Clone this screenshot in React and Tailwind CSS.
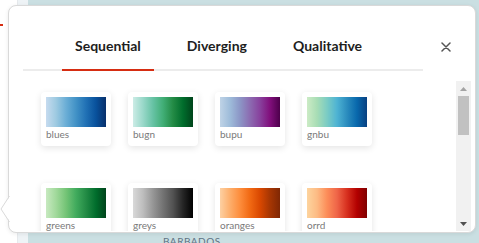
import { useState } from "react";

const palettes = [
  { name: "blues", bg: "bg-[linear-gradient(to_right,#c6dbef,#9ecae1,#6baed6,#4292c6,#2171b5,#08519c,#08306b)]" },
  { name: "bugn", bg: "bg-[linear-gradient(to_right,#ccece6,#99d8c9,#66c2a4,#41ae76,#238b45,#006d2c,#00441b)]" },
  { name: "bupu", bg: "bg-[linear-gradient(to_right,#bfd3e6,#9ebcda,#8c96c6,#8c6bb1,#88419d,#810f7c,#4d004b)]" },
  { name: "gnbu", bg: "bg-[linear-gradient(to_right,#ccebc5,#a8ddb5,#7bccc4,#4eb3d3,#2b8cbe,#0868ac,#084081)]" },
  { name: "greens", bg: "bg-[linear-gradient(to_right,#c7e9c0,#a1d99b,#74c476,#41ab5d,#238b45,#006d2c,#00441b)]" },
  { name: "greys", bg: "bg-[linear-gradient(to_right,#d9d9d9,#bdbdbd,#969696,#737373,#525252,#252525,#000000)]" },
  { name: "oranges", bg: "bg-[linear-gradient(to_right,#fdd0a2,#fdae6b,#fd8d3c,#f16913,#d94801,#a63603,#7f2704)]" },
  { name: "orrd", bg: "bg-[linear-gradient(to_right,#fdd49e,#fdbb84,#fc8d59,#ef6548,#d7301f,#b30000,#7f0000)]" },
  { name: "pubu", bg: "bg-[linear-gradient(to_right,#d0d1e6,#a6bddb,#74a9cf,#3690c0,#0570b0,#045a8d,#023858)]" },
  { name: "purd", bg: "bg-[linear-gradient(to_right,#d4b9da,#c994c7,#df65b0,#e7298a,#ce1256,#980043,#67001f)]" },
  { name: "reds", bg: "bg-[linear-gradient(to_right,#fcbba1,#fc9272,#fb6a4a,#ef3b2c,#cb181d,#a50f15,#67000d)]" },
  { name: "ylgn", bg: "bg-[linear-gradient(to_right,#d9f0a3,#addd8e,#78c679,#41ab5d,#238443,#006837,#004529)]" },
];

const tabs = ["Sequential", "Diverging", "Qualitative"];

const PaletteCard = ({ name, bg }) => (
  <div className="w-[70px] h-[54px] rounded-[4px] bg-white p-[5px] shadow-[0_2px_7px_rgba(0,0,0,0.11)]">
    <div className={`w-[60px] h-[30px] ${bg}`} />
    <div className="mt-[1px] text-[10px] leading-[12px] text-[#7a7a7a]">{name}</div>
  </div>
);

// classic scrollbar look (headless browser draws none)
const Scrollbar = () => (
  <div className="w-[15px] h-full flex flex-col bg-[#f1f1f1]">
    <div className="h-[15px] flex items-center justify-center">
      <svg width="7" height="4" viewBox="0 0 7 4">
        <path d="M3.5 0 L7 4 L0 4 Z" fill="#a3a3a3" />
      </svg>
    </div>
    <div className="mx-[2px] h-[39px] bg-[#c1c1c1]" />
    <div className="flex-1" />
    <div className="h-[15px] flex items-center justify-center">
      <svg width="7" height="4" viewBox="0 0 7 4">
        <path d="M0 0 L7 0 L3.5 4 Z" fill="#505050" />
      </svg>
    </div>
  </div>
);

export default function App() {
  const [active, setActive] = useState("Sequential");

  return (
    <div
      className="relative w-[479px] h-[243px] overflow-hidden flex bg-white"
      style={{ fontFamily: "Lato, 'Open Sans', sans-serif" }}
    >
      {/* page behind the popover */}
      <div className="relative w-[18px] h-full bg-white border-r border-[#e6e9ec]">
        <div className="absolute left-0 top-[24px] w-[3px] h-[2px] bg-[#d62d12]" />
      </div>
      <div className="w-[10px] h-full bg-[#eef3f6]" />
      <div className="relative flex-1 h-full bg-[#cadfe2]">
        <span className="absolute left-[135px] top-[234px] text-[10px] tracking-[0.5px] text-[#5e7282]">
          BARBADOS
        </span>
      </div>

      {/* popover */}
      <div className="absolute left-[8px] top-[5px] w-[468px] h-[228px] rounded-[8px] border border-[#d9d9d9] bg-white shadow-[0_1px_4px_rgba(0,0,0,0.08)]">
        <svg
          className="absolute left-[-9px] top-[190px]"
          width="10"
          height="26"
          viewBox="0 0 10 26"
        >
          <path d="M10 0 L1.5 13 L10 26 Z" fill="#ffffff" />
          <path d="M9.5 0 L1 13 L9.5 26" fill="none" stroke="#d9d9d9" strokeWidth="1" />
        </svg>

        <div className="ml-[14px] w-[400px] flex pl-[39px] gap-[20px] pt-[31px] border-b-2 border-[#ececec]">
          {tabs.map((t) => (
            <button
              key={t}
              onClick={() => setActive(t)}
              className={`-mb-[2px] px-[13px] pb-[15px] text-[14px] leading-[17px] font-bold text-[#1e1e1e] border-b-2 ${
                active === t ? "border-[#d62d12]" : "border-transparent"
              }`}
            >
              {t}
            </button>
          ))}
        </div>

        <button className="absolute right-[24px] top-[36px] w-[10px] h-[10px] flex items-center justify-center">
          <svg width="10" height="10" viewBox="0 0 10 10">
            <path d="M1 1 L9 9 M9 1 L1 9" stroke="#555" strokeWidth="1.5" strokeLinecap="round" />
          </svg>
        </button>

        <div className="ml-[14px] mt-[10px] w-[448px] h-[150px] flex">
          <div className="flex-1 h-full overflow-hidden">
            <div className="grid grid-cols-[repeat(4,70px)] gap-x-[17px] gap-y-[37px] pl-[18px] pt-[11px] pb-[20px]">
              {palettes.map((p) => (
                <PaletteCard key={p.name} {...p} />
              ))}
            </div>
          </div>
          <Scrollbar />
        </div>
      </div>
    </div>
  );
}
